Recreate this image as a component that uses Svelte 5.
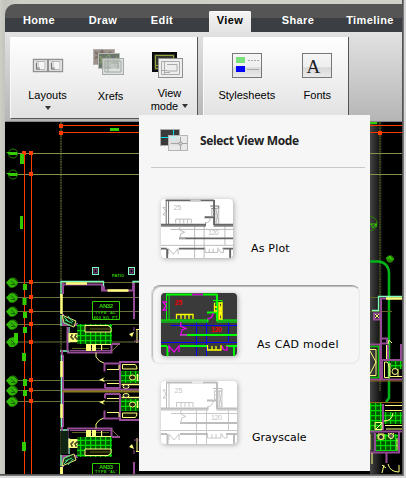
<script>
  const tabs = ['Home', 'Draw', 'Edit', 'View', 'Share', 'Timeline'];
  const modes = [
    { id: 'plot', label: 'As Plot' },
    { id: 'cad', label: 'As CAD model' },
    { id: 'gray', label: 'Grayscale' }
  ];
  let active = $state('View');
  let mode = $state('cad');

  const gridRows = [153.5, 174.5, 282.5, 297.5, 311.5, 324.5, 342, 380.5, 390.5, 401.5];
  const leftMarks = [
    [20, 154, 4, 10], [20, 216, 3, 13], [23, 284, 4, 6], [22.5, 298, 4, 7],
    [23, 312, 4, 6], [23, 327, 4, 6], [14, 333, 4, 10], [22, 353, 4, 8],
    [23, 379, 4, 7], [23, 390, 4, 6], [22, 442, 4, 9]
  ];
</script>

{#snippet kitchen()}
  <path class="mint" d="M60.500 281.500H103.500V288M133 290V281.500H141M61 281V297M61 315V326M69 327V343M60 351H69" />
  <path class="purple" d="M63 283V294M63 284.500H102V290.500H133V283M134 283V319M63 314V325H77V323M67.500 327V351M62 350V363M67 352.500H111.500V344H120M104 290V286" />
  <path class="purple thin" d="M63 325.500H74M70 350.500H111" />
  <path class="yellow fat" d="M66 283.500H87M107.500 290.500H128.500M61.500 294V314" />
  <rect x="77" y="324" width="35" height="20" fill="url(#tile)" />
  <path d="M85 325.500H108L111 328V332H85Z" fill="#121200" stroke="#ffff80" />
  <path d="M90 329H110M72 348.500H109M102 345V350M70 331V332" stroke="#5e6520" />
  <rect x="68.500" y="333" width="9" height="9" fill="#ffff80" />
  <path d="M72 334v2h-1v2h2v2M76 334v2h-1v2h2v2" stroke="#111" />
  <path class="yellow" d="M86 344.500H111M101.500 345V350M96 352.500V357Q99 362 104 363" />
  <rect x="86" y="345" width="5" height="6" fill="#ffff80" />
  <rect x="92" y="345" width="4" height="6" fill="#ffff80" />
  <path d="M112 351L119 344" stroke="#77703c" />
  <path d="M62 315L76 321L74 327L64 323Z" fill="#152c13" stroke="#e8e877" />
  <path d="M65 320L72 323M64 317l5 5M68 316l5 6M63 322l8 4" stroke="#45d985" />
  <path class="yellow" d="M136 329.500H140M137 329V343" />
  <path d="M129 334l5 -2l-2 5z" fill="#ffff80" />
  <path class="purple thin" d="M134 327V331M134 341H140V344" />
{/snippet}

{#snippet bath()}
  <path class="purple" d="M104.500 371.500V363.500H120V362H141M120 362V388M105 383.500V388M105 388H120" />
  <path class="yellow" d="M107 369.500H119M107 383.500H119M119 365V369" />
  <rect x="121" y="371" width="19" height="12" fill="url(#tile)" />
  <path d="M122.500 364.500H135Q137 365 137 369H122.500Z" fill="#171706" stroke="#ffff80" />
  <ellipse cx="132.500" cy="377.500" rx="3" ry="2.500" fill="#262608" stroke="#ffff80" />
  <path d="M137.500 374V381M121.500 384.500H140" stroke="#ffff80" stroke-width="1.500" />
  <ellipse cx="126" cy="386.500" rx="3" ry="2" fill="#222" stroke="#ffff80" />
  <path d="M105 377l-6 3l6 2l-2 -3z" fill="#ffff80" />
{/snippet}

{#snippet plan()}
  <path class="guide" d="M10 32.500H76M0 49.500H76M35.500 29V63M45.500 29V63M67.500 29V49" />
  <path class="wall" d="M5 1.500H56M0 27.500H47M56 27.500H76M56 1V28M19 42H76M0 53H6M19 53H46M65 53H76M6.500 53V63M73 53V63M46 19.500H56" />
  <path class="wall slim" d="M5.500 1V27M8 1V27M0 29H47V25M55.500 29H76M52 7.500H61V10H53" />
  <path class="core" d="M7 3V26M0 28H46M57 28H76" />
  <rect class="opening" x="31" y="0.500" width="11" height="2" />
  <path class="door" d="M6 9H2L5 13L2 17H6M20 29L19.500 33L25 35.500L21 37L19.500 42H26M52 20Q52 25 46.500 26M8 59V53L13 59L18 53V59M61 53Q62 58 66 57V53" />
  <path class="fixture" d="M15.500 26V21.500H32V26M20 22V26M24 22V26M28 22V26M46.500 52V57H60V52M51 53V57M55 53V57M53.500 10V18H56M53.500 14H56M58 10V26H61V10ZM58 10L61 26M61 10L58 26" />
  <text x="13.500" y="11.500" textLength="8">25</text>
  <text x="50" y="38.500" textLength="11">120</text>
{/snippet}

<div class="page">
  <div class="window">
    <nav>
      {#each tabs as tab}
        <button class="tab {tab.toLowerCase()}" class:active={active === tab} onclick={() => (active = tab)}>{tab}</button>
      {/each}
    </nav>

    <div class="ribbon">
      <div class="panel first">
        <button class="tool layouts">
          <svg width="32" height="28" viewBox="0 0 32 28">
            <g fill="#f5f5f5" stroke="#929292">
              <path d="M1.500 8.500H15.500V20.500H1.500ZM16.500 8.500H30.500V20.500H16.500Z" stroke-width="1.400" />
              <path d="M4 10.500H13V18.500H4ZM19 10.500H28V18.500H19ZM6 11V18M4 16.500H8M21 11V18M19 16.500H23" fill="none" stroke="#b8b8b8" />
            </g>
            <path d="M4.500 12V18H8M19.500 12V18H23" fill="none" stroke="#777" />
          </svg>
          <span>Layouts</span><i class="arrow"></i>
        </button>
        <button class="tool xrefs">
          <svg width="32" height="28" viewBox="0 0 32 28">
            <rect x="0.500" y="0.500" width="21" height="15" fill="#9b918a" stroke="#b4afaa" />
            <path d="M2 3l4 3l3 -4l4 5l5 -4M2 9l5 -2l2 6" stroke="#7d706a" stroke-width="2" fill="none" />
            <rect x="5.500" y="4.500" width="21" height="15" fill="#6c776b" stroke="#b7b9b5" />
            <path d="M7 7l4 9l5 -9l3 10l5 -9M7 14l8 -7l9 9" fill="none" stroke="#83986b" stroke-width="2" />
            <path d="M15 7v10M20 8l3 9" stroke="#52639a" />
            <rect x="9.500" y="9.500" width="21" height="16" fill="#d6dad8" fill-opacity=".77" stroke="#a8a8a8" />
            <path d="M12 12H28V23H12ZM15 12V23M12 19H18M18 14H25V20" fill="none" stroke="#a0a8a0" />
          </svg>
          <span>Xrefs</span>
        </button>
        <button class="tool viewmode">
          <svg width="32" height="28" viewBox="0 0 32 28">
            <rect x="1" y="2" width="23" height="18" fill="#30342a" stroke="#080908" stroke-width="2" />
            <path d="M3.500 4.500H21.500V17.500H3.500ZM6.500 7V15M3 14.500H8M9 7.500H20" fill="none" stroke="#8fa43b" />
            <rect x="6.500" y="7.500" width="24" height="19" fill="#eee" stroke="#909090" />
            <path d="M9.500 10.500H27.500V23.500H9.500ZM12.500 11V23M9.500 19.500H15M15 13.500H25V20H15M12 21.500H18" fill="none" stroke="#aaa" />
          </svg>
          <span>View<br />mode <i class="arrow inline"></i></span>
        </button>
      </div>
      <div class="panel second">
        <button class="tool styles">
          <svg width="32" height="28" viewBox="0 0 32 28">
            <defs><linearGradient id="shine" x2="0" y2="1"><stop offset="0" stop-color="#f6f6f6" /><stop offset=".55" stop-color="#eee" /><stop offset=".6" stop-color="#d8d8d8" /><stop offset="1" stop-color="#ececec" /></linearGradient></defs>
            <rect x="1.500" y="2.500" width="29" height="24" fill="url(#shine)" stroke="#777" />
            <rect x="5" y="6" width="9" height="6" fill="#7be07b" />
            <rect x="5" y="15" width="9" height="6" fill="#00f" />
            <path d="M17 9.500H28" stroke="#aaa" stroke-dasharray="2 1" /><path d="M16 18.500H28" stroke="#aaa" />
          </svg>
          <span>Stylesheets</span>
        </button>
        <button class="tool fonts">
          <svg width="32" height="28" viewBox="0 0 32 28">
            <rect x="1.500" y="2.500" width="29" height="24" fill="url(#shine)" stroke="#777" />
            <text x="5.500" y="22" font-family="Liberation Serif, serif" font-size="19" fill="#222">A</text>
          </svg>
          <span>Fonts</span>
        </button>
      </div>
    </div>

    <svg class="drawing" width="397" height="352" viewBox="5 122 397 352">
      <defs>
        <pattern id="tile" width="5" height="5" patternUnits="userSpaceOnUse">
          <rect width="5" height="5" fill="#050" />
          <path d="M0 .500H5M.500 0V5" stroke="#00d800" stroke-width="1.400" />
        </pattern>
        <linearGradient id="edge"><stop offset="0" stop-color="#444" /><stop offset="1" stop-color="#444" stop-opacity="0" /></linearGradient>
      </defs>
      <rect x="5" y="122" width="397" height="352" fill="#000" />
      <rect x="370" y="122" width="14" height="352" fill="url(#edge)" />
      <path class="axis" d="M61 122V474M380 122V391" />
      {#each gridRows as y, i}
        <path class="row" class:dim={i > 1} d="M17 {y}H{i < 2 ? 402 : 140}" />
        <g class="bubble">
          <circle cx="13" cy={y} r="4.500" />
          {#if i < 2}
            <path d="M6 {y - 1.5}H17V{y + 1.5}H10Z" fill="#3c0" />
          {:else}
            <path d="M6 {y}l4 -4h4l3 3v3l-4 3h-3z" fill="#2fb500" />
            <path d="M11 {y - 2}l4 4M11 {y + 2}h4" stroke="#175c04" />
          {/if}
        </g>
      {/each}
      <path class="red" d="M61 125.500H402M61 132.500H402M24.500 153V474M31.500 153V474" />
      {#each gridRows as y}
        <rect x="29" y={Math.floor(y) - 2} width="4" height="4" fill="#ff3c00" />
      {/each}
      <path d="M59 124h4v4h-4zM59 131h4v4h-4zM22 151h4v4h-4zM378 131h4v4h-4z" fill="#ff3c00" />
      {#each leftMarks as [x, y, w, h]}
        <rect {x} {y} width={w} height={h} fill="#3c0" />
      {/each}
      <path d="M110 128h9v3h-9zM370 122h7v2h-7z" fill="#3c0" />

      <g>{@render kitchen()}</g>
      <g transform="matrix(1 0 0 -1 0 781)">{@render kitchen()}</g>
      <g>{@render bath()}</g>
      <g transform="matrix(1 0 0 -1 0 782)">{@render bath()}</g>
      <path class="mint" d="M61.500 355V427" />
      <path class="purple" d="M63 355V427M62 389.500H140" />
      <path class="yellow fat" d="M61.500 361V377M61.500 404V418M61.500 467V474" />
      <path d="M62 391.500H140" stroke="#8b7b20" stroke-width="2" />
      <path d="M61 431h7v23h-7z" fill="#102414" />
      {#each [92.5, 128.5] as x}
        <rect {x} y="267.500" width="6" height="7" stroke="#80ffc0" />
        <rect x={x + 1.5} y="269" width="3" height="4" stroke="#964b96" />
      {/each}
      <g class="label">
        <text x="112" y="277" textLength="12">PATIO</text>
        <path d="M92.500 301.500H119.500V319.500H92.500ZM92.500 474V463.500H119.500V474" />
        <text x="99" y="308" textLength="14" class="big">AN32</text>
        <text x="95" y="313.500" textLength="22">TYPE 'AL'</text>
        <text x="93.500" y="318.500" textLength="25">800 SQ. FT.</text>
        <text x="99" y="469" textLength="14" class="big">AN33</text>
        <text x="95" y="473" textLength="22">TYPE 'AL'</text>
      </g>

      <g class="east">
        <circle cx="370" cy="223.500" r="7" stroke="#2a8500" />
        <path d="M370 224H377M371 224l2 4l3 -4v3" stroke="#3c0" />
        <circle cx="390" cy="259" r="3.500" fill="#289000" stroke="#165400" />
        <path d="M386 258h3l1 -2l1 3h3" stroke="#3d0" />
        <path d="M366 261.500H379Q389 263 389 274V398l-3 4" stroke="#00b41a" stroke-width="2.500" />
        <path d="M370 297.500H378M370 311.500H392" stroke="#5e6520" />
        <path class="mint" d="M372 310.500H378.500V296.500H402" />
        <path class="purple" d="M381 298V360M381 298.500H386M374 313.500h6v6h-6zM382 338.500h5v5h-5M370 344.500H380V379M382 379V360H402M401 344V360M370 379.500H402M388 345V360" />
        <path class="yellow fat" d="M386 298.500H402" />
        <path class="yellow" d="M375 314l4 4M379 314l-4 4M388 344l1 -4l3 3M386.500 345V359M370 349.500H376V375.500H370M370 351L376 362L370 374M384.500 362H387Q389 363 389 368V377.500H384.500ZM398 364V377M390 376.500H402M390 363V376" />
        <path d="M370 346.500H378.500V377.500H370" stroke="#00bc00" stroke-width="1.500" />
        <rect x="391" y="361" width="11" height="8" fill="url(#tile)" />
        <circle cx="395" cy="371.500" r="3" fill="#111" stroke="#ffff80" />
        <path d="M370 381H402M370 402.500H402" stroke="#8e6a20" />
        <rect x="370" y="403" width="12" height="28" fill="url(#tile)" />
        <rect x="384" y="412" width="18" height="12" fill="url(#tile)" />
        <path class="purple" d="M383 404V430M370 431.500H402M370 452.500H399V432M386.500 452V463M375 433V451" />
        <path class="yellow" d="M385 405.500H402M385 410.500H402M385 425.500H402M386 429H402M375 422.500H382V429.500H375ZM376 429l6 -6M384 421Q392 421 393 413M372 453V464M384 465l-2 8M382 465l4 3M388 464Q390 472 399 472V465M370 434V450" />
        <rect x="376" y="434" width="22" height="17" fill="url(#tile)" />
        <path class="yellow" d="M378 434h6v5h-6zM388 433q3 5 6 0M397 438V450" />
        <circle cx="381" cy="437" r="2.500" fill="#222" stroke="#ffff80" />
        <circle cx="391" cy="436" r="2.500" fill="#555" stroke="#ffff80" />
      </g>
    </svg>
  </div>

  <section class="menu">
    <header>
      <svg width="30" height="24" viewBox="0 0 30 24">
        <rect x="0.500" y="0.500" width="19" height="16" fill="#3a3a3a" stroke="#aaa" />
        <path d="M1 8.500H19M13.500 1V16" stroke="#00dfee" />
        <rect x="8.500" y="6.500" width="19" height="15" fill="#e8e8e8" fill-opacity=".95" stroke="#b6b6b6" />
        <path d="M13.500 7V12M9 8.500H17" stroke="#b4f5f8" />
        <path d="M11 14.500H27M20.500 8V21" stroke="#a5a5a5" />
        <circle cx="20.500" cy="14.500" r="1.700" fill="#d0d0d0" stroke="#999" />
      </svg>
      <h2>Select View Mode</h2>
    </header>
    <div class="modes">
      {#each modes as m}
        <button class="mode {m.id}" class:selected={mode === m.id} onclick={() => (mode = m.id)}>
          <svg class="thumb" viewBox="0 0 76 63" preserveAspectRatio="none">{@render plan()}</svg>
          <span>{m.label}</span>
        </button>
      {/each}
    </div>
  </section>
</div>

<style>
  :global(body) { margin: 0; background: #fff; }
  .page {
    position: relative;
    box-sizing: border-box;
    width: 406px;
    height: 478px;
    padding: 4px 4px 4px 5px;
    overflow: hidden;
    background: linear-gradient(90deg, #cdcec6, #c3c4bc 5px, #cdcec5 20px, #cfd0c7);
    font-family: "Liberation Sans", Arial, sans-serif;
  }
  .page::after {
    content: "";
    position: absolute;
    inset: 0;
    border-right: 2px solid #d6d6d6;
    border-bottom: 2px solid #ddd;
    box-shadow: inset -1px -1px #777, inset -2px -2px #555;
    pointer-events: none;
  }
  button { margin: 0; padding: 0; border: 0; background: none; font: inherit; color: inherit; }
  .window { display: flex; flex-direction: column; width: 397px; height: 470px; border-top-left-radius: 10px; overflow: hidden; background: #bbb; }
  nav { display: flex; align-items: flex-end; height: 28px; flex: none; background: linear-gradient(#555 0 14px, #3b3f43 14px); }
  .tab { box-sizing: border-box; height: 21px; padding-bottom: 3px; color: #fff; font-weight: bold; font-size: 11px; letter-spacing: .4px; line-height: 17px; }
  .home { width: 68px; }
  .draw { width: 60px; }
  .edit { width: 58px; margin-right: 18px; }
  .view { width: 42px; }
  .share { width: 94px; }
  .timeline { width: 50px; }
  .tab.active { color: #000; background: linear-gradient(#f5f5f5, #e4e4e4); border-radius: 2px 2px 0 0; box-shadow: inset 0 1px #fff; }
  .ribbon { display: flex; gap: 5px; box-sizing: border-box; height: 90px; flex: none; padding: 5px 0 3px 5px; background: linear-gradient(#e2e2e2, #b5b5b5); border-bottom: 1px solid #85878b; }
  .panel { display: flex; box-sizing: border-box; height: 82px; background: linear-gradient(#fff, #f2f2f2 45%, #e1e1e1); border-right: 1px solid #555; border-bottom: 1px solid #555; border-left: 1px solid #fafafa; }
  .first { width: 188px; padding-left: 5px; }
  .second { width: 146px; }
  .tool { display: flex; flex-direction: column; align-items: center; font-size: 11px; line-height: 13px; color: #000; }
  .tool svg { display: block; flex: none; }
  .tool span { margin-top: 10px; }
  .layouts { width: 63px; padding-top: 14px; }
  .xrefs { width: 63px; padding-top: 12px; }
  .xrefs svg { margin-right: 4px; }
  .xrefs span { margin-top: 13px; }
  .viewmode { width: 55px; padding-top: 14px; }
  .viewmode svg { margin-right: 4px; }
  .viewmode span { margin-top: 8px; white-space: nowrap; }
  .arrow { width: 0; height: 0; border: 3px solid transparent; border-top: 4px solid #333; border-bottom: 0; margin-top: 4px; }
  .arrow.inline { display: inline-block; margin: 0 0 2px 1px; }
  .styles { width: 86px; padding: 14px 0 0 2px; }
  .fonts { width: 62px; padding: 14px 1px 0 0; }
  .styles svg { margin-left: 1px; }
  .drawing { display: block; flex: none; fill: none; }

  .mint { stroke: #80ffc0; stroke-width: 1.3; }
  .purple { stroke: #964b96; stroke-width: 2; }
  .purple.thin { stroke-width: 1; }
  .yellow { stroke: #ffff80; stroke-width: 1; }
  .yellow.fat { stroke-width: 2.5; }
  .red { stroke: #ff3c00; }
  .axis { stroke: #3b4420; stroke-width: 2; stroke-dasharray: 2 .6; }
  .row { stroke: #84934a; }
  .row.dim { stroke: #66723a; }
  .bubble circle { stroke: #248500; }
  .label path { stroke: #3c0; }
  .label text { fill: #3c0; font-size: 4px; font-weight: bold; }
  .label .big { font-size: 6px; }

  .menu { position: absolute; left: 139px; top: 115px; width: 231px; height: 356px; background: #f6f6f6; }
  header { display: flex; align-items: flex-start; box-sizing: border-box; height: 53px; margin: 0 5px 0 12px; padding: 14px 0 0 9px; border-bottom: 1px solid #c9c9c9; }
  h2 { margin: 3px 0 0 10px; font: 700 12px/18px "Open Sans", sans-serif; letter-spacing: -.35px; color: #222; white-space: nowrap; }
  .modes { display: flex; flex-direction: column; padding: 19px 9px 0 12px; }
  .mode { display: flex; align-items: flex-start; box-sizing: border-box; width: 210px; border: 1px solid transparent; border-radius: 9px; padding: 0 0 0 9px; text-align: left; font: 11px/14px "DejaVu Sans", sans-serif; letter-spacing: .2px; color: #000; }
  .plot { height: 98px; padding-top: 11px; }
  .cad { height: 80px; padding-top: 7px; letter-spacing: .3px; }
  .gray { height: 90px; padding-top: 15px; letter-spacing: 0; }
  .mode.selected { box-shadow: inset 1px 1px 1px #bbb, inset -1px -1px 1px #e8e8e8; border-top-color: #999; border-left-color: #d8d8d8; }
  .thumb { display: block; flex: none; width: 76px; height: 63px; border-radius: 4px; background: #fff; box-shadow: 1px 1px 5px #aaa; }
  .plot .thumb { width: 72px; height: 59px; }
  .mode span { margin: 45px 0 0 20px; white-space: nowrap; }
  .plot span { margin: 43px 0 0 18px; }
  .gray span { margin: 50px 0 0 15px; }
  .thumb path { fill: none; stroke-width: 1; }
  .thumb .wall { stroke-width: 2; }
  .thumb .wall.slim { stroke-width: 1; }
  .thumb text { font: 7px "Liberation Sans", sans-serif; }
  .plot .wall { stroke: #666; }
  .plot .core, .gray .core { stroke: none; }
  .plot .guide, .plot .door, .plot .fixture { stroke: #b8b8b8; }
  .plot .opening { fill: #ccc; }
  .plot text { fill: #bbb; }
  .cad .thumb { background: #3a3a3a; }
  .cad .wall { stroke: #0f0; }
  .cad .core { stroke: #305030; stroke-width: .7; }
  .cad .guide { stroke: #00f; }
  .cad .door { stroke: #e800e8; stroke-width: 1.3; }
  .cad .fixture { stroke: #ff0; stroke-width: 1.3; }
  .cad .opening { fill: #c000c0; }
  .cad text { fill: #f00000; font-weight: bold; }
  .gray .wall { stroke: #bdbdbd; }
  .gray .guide, .gray .door, .gray .fixture { stroke: #c8c8c8; }
  .gray .opening { fill: #eee; }
  .gray text { fill: #c4c4c4; }
</style>
